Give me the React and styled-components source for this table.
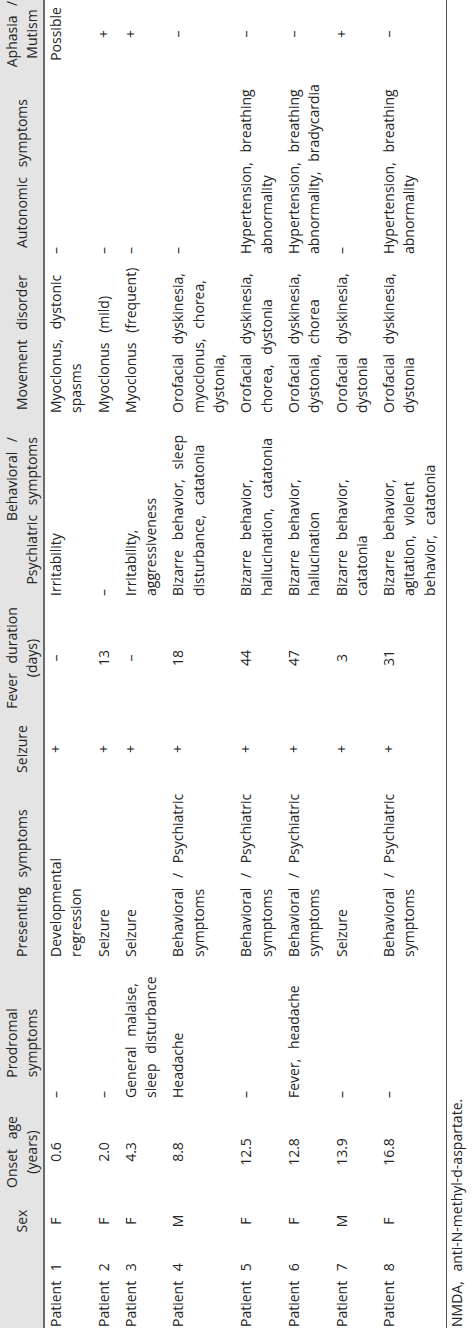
import React from "react";
import styled, { createGlobalStyle } from "styled-components";

const GlobalStyle = createGlobalStyle`
  html, body { margin: 0; padding: 0; background: #ffffff; }
  body { overflow: hidden; }
`;

const Page = styled.div`
  width: 474px;
  height: 1328px;
  overflow: hidden;
  background: #ffffff;
`;

/* The reference is a table printed sideways: it is laid out normally and then turned. */
const Turned = styled.div`
  width: 1332px;
  height: 474px;
  transform-origin: 0 0;
  transform: translateY(1328px) rotate(-90deg);
  font-family: "Open Sans", "Noto Sans", "DejaVu Sans", sans-serif;
  font-size: 14px;
  color: #242424;
  word-spacing: 6px;
`;

const Table = styled.table`
  border-collapse: separate;
  border-spacing: 0;
  table-layout: fixed;
  width: 1332px;
`;

const HeadCell = styled.th`
  padding: 0;
  background: #e4e4e4;
  border-bottom: 2px solid #6a6a6a;
  font-weight: 400;
  vertical-align: middle;
`;

const HeadInner = styled.div`
  height: 43px;
  display: flex;
  flex-direction: column;
  justify-content: center;
  text-align: ${(p) => p.$align};
  padding-left: ${(p) => p.$pl}px;
  padding-right: ${(p) => p.$pr}px;
  line-height: 20px;
  white-space: nowrap;
`;

const BodyRow = styled.tr`
  &:last-child > td {
    border-bottom: 1.5px solid #555555;
  }
`;

const Cell = styled.td`
  vertical-align: top;
  text-align: ${(p) => p.$align};
  padding: 1px ${(p) => p.$pr}px 6px ${(p) => p.$pl}px;
  line-height: 20.3px;
  white-space: nowrap;
`;

const Footnote = styled.p`
  margin: 0;
  padding-left: 1px;
  line-height: 20px;
  white-space: nowrap;
`;

const columns = [
  { w: 90, align: "left", pl: 1, pr: 0, head: [""], hAlign: "left", hPl: 1, hPr: 0 },
  { w: 34, align: "center", pl: 0, pr: 0, head: ["Sex"], hAlign: "center", hPl: 0, hPr: 0 },
  { w: 104, align: "center", pl: 0, pr: 0, head: ["Onset age", "(years)"], hAlign: "center", hPl: 0, hPr: 0 },
  { w: 139, align: "left", pl: 2, pr: 0, head: ["Prodromal", "symptoms"], hAlign: "center", hPl: 0, hPr: 25 },
  { w: 174, align: "left", pl: 4, pr: 0, head: ["Presenting symptoms"], hAlign: "left", hPl: 4, hPr: 0 },
  { w: 76, align: "center", pl: 0, pr: 0, head: ["Seizure"], hAlign: "center", hPl: 0, hPr: 0 },
  { w: 106, align: "center", pl: 0, pr: 0, head: ["Fever duration", "(days)"], hAlign: "center", hPl: 0, hPr: 0 },
  { w: 188, align: "left", pl: 9, pr: 0, head: ["Behavioral /", "Psychiatric symptoms"], hAlign: "right", hPl: 0, hPr: 20 },
  { w: 158, align: "left", pl: 4, pr: 0, head: ["Movement disorder"], hAlign: "left", hPl: 7, hPr: 0 },
  { w: 187, align: "left", pl: 5, pr: 0, head: ["Autonomic symptoms"], hAlign: "left", hPl: 11, hPr: 0 },
  { w: 76, align: "center", pl: 0, pr: 0, head: ["Aphasia /", "Mutism"], hAlign: "center", hPl: 0, hPr: 0 },
];

const D = "\u2013";

const rows = [
  [["Patient 1"], ["F"], ["0.6"], [D], ["Developmental", "regression"], ["+"], [D], ["Irritability"], ["Myoclonus, dystonic", "spasms"], [D], ["Possible"]],
  [["Patient 2"], ["F"], ["2.0"], [D], ["Seizure"], ["+"], ["13"], [D], ["Myoclonus (mild)"], [D], ["+"]],
  [["Patient 3"], ["F"], ["4.3"], ["General malaise,", "sleep disturbance"], ["Seizure"], ["+"], [D], ["Irritability,", "aggressiveness"], ["Myoclonus (frequent)"], [D], ["+"]],
  [["Patient 4"], ["M"], ["8.8"], ["Headache"], ["Behavioral / Psychiatric", "symptoms"], ["+"], ["18"], ["Bizarre behavior, sleep", "disturbance, catatonia"], ["Orofacial dyskinesia,", "myoclonus, chorea,", "dystonia,"], [D], [D]],
  [["Patient 5"], ["F"], ["12.5"], [D], ["Behavioral / Psychiatric", "symptoms"], ["+"], ["44"], ["Bizarre behavior,", "hallucination, catatonia"], ["Orofacial dyskinesia,", "chorea, dystonia"], ["Hypertension, breathing", "abnormality"], [D]],
  [["Patient 6"], ["F"], ["12.8"], ["Fever, headache"], ["Behavioral / Psychiatric", "symptoms"], ["+"], ["47"], ["Bizarre behavior,", "hallucination"], ["Orofacial dyskinesia,", "dystonia, chorea"], ["Hypertension, breathing", "abnormality, bradycardia"], [D]],
  [["Patient 7"], ["M"], ["13.9"], [D], ["Seizure"], ["+"], ["3"], ["Bizarre behavior,", "catatonia"], ["Orofacial dyskinesia,", "dystonia"], [D], ["+"]],
  [["Patient 8"], ["F"], ["16.8"], [D], ["Behavioral / Psychiatric", "symptoms"], ["+"], ["31"], ["Bizarre behavior,", "agitation, violent", "behavior, catatonia"], ["Orofacial dyskinesia,", "dystonia"], ["Hypertension, breathing", "abnormality"], [D]],
];

function Lines({ lines }) {
  return lines.map((l, i) => (
    <React.Fragment key={i}>
      {i > 0 && <br />}
      {l}
    </React.Fragment>
  ));
}

export default function App() {
  return (
    <Page>
      <GlobalStyle />
      <Turned>
        <Table>
          <colgroup>
            {columns.map((c, i) => (
              <col key={i} style={{ width: c.w }} />
            ))}
          </colgroup>
          <thead>
            <tr>
              {columns.map((c, i) => (
                <HeadCell key={i}>
                  <HeadInner $align={c.hAlign} $pl={c.hPl} $pr={c.hPr}>
                    <div>
                      <Lines lines={c.head} />
                    </div>
                  </HeadInner>
                </HeadCell>
              ))}
            </tr>
          </thead>
          <tbody>
            {rows.map((r, ri) => (
              <BodyRow key={ri}>
                {r.map((cell, ci) => (
                  <Cell key={ci} $align={columns[ci].align} $pl={columns[ci].pl} $pr={columns[ci].pr}>
                    <Lines lines={cell} />
                  </Cell>
                ))}
              </BodyRow>
            ))}
          </tbody>
        </Table>
        <Footnote>NMDA, anti-N-methyl-d-aspartate.</Footnote>
      </Turned>
    </Page>
  );
}
